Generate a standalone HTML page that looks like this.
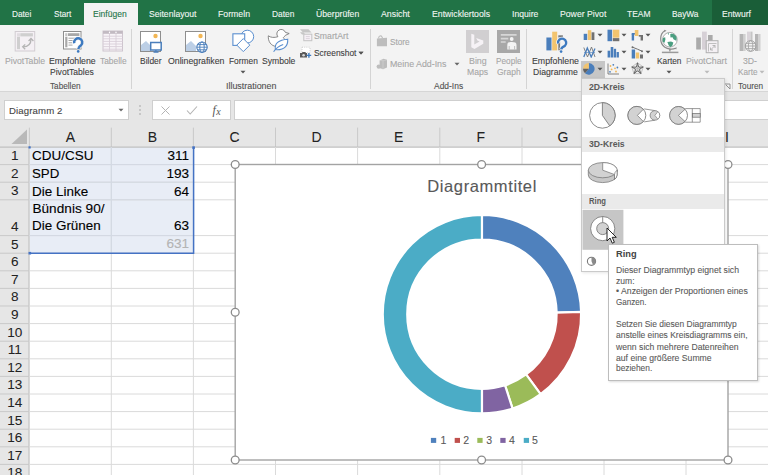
<!DOCTYPE html>
<html><head><meta charset="utf-8"><style>
html,body{margin:0;padding:0;}
body{width:768px;height:475px;overflow:hidden;position:relative;background:#fff;font-family:"Liberation Sans", sans-serif;}
div{font-family:"Liberation Sans", sans-serif;}
</style></head><body>
<div style="position:absolute;left:0px;top:0px;width:768px;height:24.5px;background:#217346;"></div>
<div style="position:absolute;left:712px;top:0px;width:56px;height:24.5px;background:#1a5e38;"></div>
<div style="position:absolute;left:84px;top:3px;width:54px;height:22px;background:#f3f3f3;"></div>
<div style="position:absolute;left:0px;top:24.5px;width:768px;height:67px;background:#f3f3f3;"></div>
<div style="position:absolute;left:0px;top:91px;width:768px;height:1px;background:#d6d6d6;"></div>
<div style="position:absolute;left:131px;top:28.5px;width:1px;height:60px;background:#d4d4d4;"></div>
<div style="position:absolute;left:370px;top:28.5px;width:1px;height:60px;background:#d4d4d4;"></div>
<div style="position:absolute;left:526px;top:28.5px;width:1px;height:60px;background:#d4d4d4;"></div>
<div style="position:absolute;left:732px;top:28.5px;width:1px;height:60px;background:#d4d4d4;"></div>
<svg style="position:absolute;left:238.8px;top:68.9px;z-index:4" width="8" height="6" viewBox="0 0 8 6"><path d="M1.5 1.75L6.5 1.75L4 4.5Z" fill="#555"/></svg>
<svg style="position:absolute;left:356.7px;top:49.5px;z-index:4" width="8" height="6" viewBox="0 0 8 6"><path d="M1.5 1.75L6.5 1.75L4 4.5Z" fill="#555"/></svg>
<svg style="position:absolute;left:453px;top:60.8px;z-index:4" width="8" height="6" viewBox="0 0 8 6"><path d="M1.5 1.75L6.5 1.75L4 4.5Z" fill="#666"/></svg>
<svg style="position:absolute;left:664.5px;top:68.9px;z-index:4" width="8" height="6" viewBox="0 0 8 6"><path d="M1.5 1.75L6.5 1.75L4 4.5Z" fill="#555"/></svg>
<svg style="position:absolute;left:702.5px;top:68.9px;z-index:4" width="8" height="6" viewBox="0 0 8 6"><path d="M1.5 1.75L6.5 1.75L4 4.5Z" fill="#bbb"/></svg>
<svg style="position:absolute;left:757.8px;top:68.9px;z-index:4" width="8" height="6" viewBox="0 0 8 6"><path d="M1.5 1.75L6.5 1.75L4 4.5Z" fill="#bbb"/></svg>
<svg style="position:absolute;left:14px;top:30px;z-index:3" width="22" height="22" viewBox="0 0 22 22"><rect x="1.2" y="1.5" width="19.5" height="19.5" fill="#f4f0f4" stroke="#d2cdd2" stroke-width="1"/>
<rect x="3" y="3.2" width="3" height="3.2" fill="#e0dce0"/><rect x="6.3" y="3.2" width="12.6" height="3.2" fill="#cfcfcf"/>
<rect x="3" y="6.8" width="3" height="12.4" fill="#cfcfcf"/>
<path d="M17 9 C17 14 14.5 16.8 9 16.8" fill="none" stroke="#b4b4b4" stroke-width="1.3"/>
<path d="M14.6 11 L17 8.5 L19.4 11" fill="none" stroke="#b4b4b4" stroke-width="1.3"/>
<path d="M11.2 14.4 L8.7 16.8 L11.2 19.2" fill="none" stroke="#b4b4b4" stroke-width="1.3"/></svg>
<svg style="position:absolute;left:62px;top:30px;z-index:3" width="23" height="24" viewBox="0 0 23 24"><rect x="1.5" y="1.5" width="17.5" height="17.5" fill="#fff" stroke="#8f8f8f" stroke-width="1"/>
<rect x="3.2" y="3.2" width="2.2" height="2.8" fill="#c4c4c4"/><rect x="6" y="3.2" width="11.4" height="2.8" fill="#a8a8a8"/>
<rect x="3.2" y="6.7" width="2.2" height="10.6" fill="#a8a8a8"/>
<path d="M6.5 8.2h7M6.5 10.5h5M6.5 12.8h4M6.5 15.1h4" stroke="#9a9a9a" stroke-width="0.9"/>
<path d="M12.2 13.2 A4.1 4.1 0 1 1 19 15.4 Q16.5 16.8 16.3 19.2" fill="none" stroke="#f3f3f3" stroke-width="3.8"/>
<path d="M12.2 13.2 A4.1 4.1 0 1 1 19 15.4 Q16.5 16.8 16.3 19.2" fill="none" stroke="#3d7ac0" stroke-width="2.4"/>
<circle cx="16.2" cy="21.4" r="1.9" fill="#f3f3f3"/><circle cx="16.2" cy="21.4" r="1.3" fill="#3d7ac0"/></svg>
<svg style="position:absolute;left:102px;top:30px;z-index:3" width="22" height="23" viewBox="0 0 22 23"><rect x="1" y="1" width="19.5" height="20" fill="#f8f4f8" stroke="#cdc4cd" stroke-width="1"/><rect x="1" y="1" width="19.5" height="2.8" fill="#c2bac2"/><path d="M1 6.2H20.5" stroke="#d8ced8" stroke-width="0.9"/><path d="M1 8.8H20.5" stroke="#d8ced8" stroke-width="0.9"/><path d="M1 11.4H20.5" stroke="#d8ced8" stroke-width="0.9"/><path d="M1 14.0H20.5" stroke="#d8ced8" stroke-width="0.9"/><path d="M1 16.6H20.5" stroke="#d8ced8" stroke-width="0.9"/><path d="M1 19.2H20.5" stroke="#d8ced8" stroke-width="0.9"/><path d="M7.5 1V21M14 1V21" stroke="#d8ced8" stroke-width="0.9"/><circle cx="7.5" cy="2.4" r="0.7" fill="#fff"/><circle cx="14" cy="2.4" r="0.7" fill="#fff"/></svg>
<svg style="position:absolute;left:140px;top:31px;z-index:3" width="23" height="23" viewBox="0 0 23 23"><rect x="0.5" y="0.5" width="20" height="20" fill="#fff" stroke="#8e8e8e" stroke-width="1"/>
<circle cx="15.5" cy="5" r="2.2" fill="#f2b654"/>
<path d="M1 20 L1 14 L6 10 L11 15 L11 20Z" fill="#bccfe6"/><rect x="10.7" y="11.5" width="10.5" height="7.5" fill="#fff" stroke="#4a7ebb" stroke-width="1.5"/>
<path d="M15.9 19v1.7M13.5 21h5" stroke="#4a7ebb" stroke-width="1.3"/></svg>
<svg style="position:absolute;left:185px;top:31px;z-index:3" width="23" height="23" viewBox="0 0 23 23"><rect x="0.5" y="0.5" width="20" height="20" fill="#fff" stroke="#8e8e8e" stroke-width="1"/>
<circle cx="15.5" cy="5" r="2.2" fill="#f2b654"/>
<path d="M1 20 L1 14 L6 10 L11 15 L11 20Z" fill="#bccfe6"/><circle cx="17" cy="16.2" r="5.2" fill="#fff" stroke="#4a7ebb" stroke-width="1.1"/>
<ellipse cx="17" cy="16.2" rx="2.2" ry="5.2" fill="none" stroke="#4a7ebb" stroke-width="1"/>
<path d="M11.8 16.2h10.4M12.6 13.6h8.8M12.6 18.8h8.8" stroke="#4a7ebb" stroke-width="0.9"/></svg>
<svg style="position:absolute;left:230px;top:28px;z-index:3" width="26" height="26" viewBox="0 0 26 26"><circle cx="17.3" cy="8.6" r="6.4" fill="#fff" stroke="#5b8fcf" stroke-width="1"/>
<rect x="2.9" y="5.8" width="11.8" height="11.6" fill="#fff" stroke="#5b8fcf" stroke-width="1.1"/>
<path d="M13.3 10.6 L19.8 17.1 L13.3 23.6 L6.8 17.1Z" fill="#fff" stroke="#5b8fcf" stroke-width="1"/></svg>
<svg style="position:absolute;left:266px;top:28px;z-index:3" width="25" height="25" viewBox="0 0 25 25"><path d="M2.3 7.8 C4.5 9.6 8.5 9.9 11.9 8.7 A4.4 4.4 0 1 1 19.4 4.4 L23.2 5.5 L19.3 7.4 C18.7 8.4 17.8 9.2 17.3 9.7 C18.3 10.6 18.7 11.6 18.7 12.6 L10.5 18.6 C4.8 17.8 2 13.5 2.3 7.8Z" fill="#fff" stroke="#7c7c7c" stroke-width="0.9" stroke-linejoin="round"/>
<path d="M9.4 21.6 C8.2 15.8 12.5 11.8 21.7 11.2 C22.2 17.5 18.5 21.8 11.2 21.8Z" fill="#fff" stroke="#5b8fcf" stroke-width="1.1"/>
<path d="M7.6 23.7 C10 20 13 17.8 17.2 16.4" fill="none" stroke="#5b8fcf" stroke-width="1.1"/></svg>
<svg style="position:absolute;left:299px;top:28px;z-index:3" width="15" height="14" viewBox="0 0 15 14"><path d="M1 1.2h8.5l3 3.2H4Z" fill="#c6c6c6"/><path d="M1 4.2h3.5l1.8 2.2H3Z" fill="#c6c6c6"/>
<rect x="4.8" y="6.2" width="8" height="6.5" fill="#f6f0f6" stroke="#c4c4c4" stroke-width="1"/>
<path d="M6.8 8.6h4M6.8 10.6h4" stroke="#d0c8d0" stroke-width="0.7"/></svg>
<svg style="position:absolute;left:299px;top:46px;z-index:3" width="15" height="14" viewBox="0 0 15 14"><rect x="3" y="1.2" width="8" height="5.5" fill="#fff" stroke="#c0c0c0" stroke-width="0.7" stroke-dasharray="1 1.2"/>
<path d="M1 7h1.8l0.8-1h2.6l0.8 1h1v4.6H1Z" fill="#5a5a5a"/><circle cx="4.6" cy="9.2" r="1.3" fill="#d8d8d8"/>
<path d="M9.9 7.1v4.6M7.6 9.4h4.6" stroke="#3d7ac0" stroke-width="1.4"/></svg>
<svg style="position:absolute;left:356.7px;top:49.5px;z-index:4" width="8" height="6" viewBox="0 0 8 6"><path d="M1.5 1.75L6.5 1.75L4 4.5Z" fill="#555"/></svg>
<svg style="position:absolute;left:376px;top:34px;z-index:3" width="13" height="14" viewBox="0 0 13 14"><path d="M0.9 4.6 L11 3.8 L11 12.2 L0.9 12.2Z" fill="#bdbdbd"/><path d="M2.6 4.4 C2.6 2 4.4 1.6 5.3 2 L6.6 4" fill="none" stroke="#bdbdbd" stroke-width="1.1"/></svg>
<svg style="position:absolute;left:376px;top:58px;z-index:3" width="13" height="12" viewBox="0 0 13 12"><path d="M3.6 2.4 L7.6 0.8 L11 1.8 L11 9.6 L7 11.2 L3.6 10Z" fill="#bdbdbd"/><path d="M7 2.7 L7 11.2 M3.6 2.4 L7 2.7 L11 1.8" fill="none" stroke="#d8d8d8" stroke-width="0.5"/><circle cx="2.8" cy="8.6" r="2.2" fill="#bdbdbd"/></svg>
<svg style="position:absolute;left:466px;top:29.5px;z-index:3" width="23" height="23.5" viewBox="0 0 23 23.5"><rect x="0" y="0" width="23" height="23.5" fill="#d1cfd1"/>
<path d="M5.3 3.8 L8.3 4.8 L8.3 14.4 L13.6 11.5 L11.4 10.5 L10.2 8 L17.3 10.4 L17.3 13.8 L8.5 19 L5.3 17.2Z" fill="#f6f2f6"/></svg>
<svg style="position:absolute;left:496.5px;top:29.5px;z-index:3" width="23.5" height="23.5" viewBox="0 0 23.5 23.5"><rect x="0" y="0" width="23.5" height="23.5" fill="#a8a8a8"/>
<path d="M3.8 4.8h15.8M3.8 8.6h7.5M3.8 12h4.9" stroke="#d6d6d6" stroke-width="1.7"/>
<circle cx="14.7" cy="9" r="1.9" fill="#f4f4f4"/><path d="M10.3 19.5 L10.3 15 C10.3 12.6 12 12 14.9 12 C17.8 12 19.5 12.6 19.5 15 L19.5 19.5Z" fill="#f4f4f4"/>
<path d="M12.2 16v3.5M17.6 16v3.5" stroke="#a8a8a8" stroke-width="0.7"/></svg>
<svg style="position:absolute;left:545px;top:30px;z-index:3" width="24" height="24" viewBox="0 0 24 24"><rect x="1.4" y="7.5" width="5.1" height="12.9" fill="#4a7ebb"/>
<rect x="7.2" y="1.7" width="5" height="18.7" fill="#f2c46f"/>
<rect x="13.3" y="5.3" width="4.6" height="2.2" fill="#7a7a7a"/><rect x="13.3" y="8.3" width="1.8" height="12" fill="#7a7a7a"/>
<path d="M13.1 13.6 A4.1 4.1 0 1 1 19.9 15.8 Q16.4 17.2 16.2 19.4" fill="none" stroke="#f3f3f3" stroke-width="3.8"/>
<path d="M13.1 13.6 A4.1 4.1 0 1 1 19.9 15.8 Q16.4 17.2 16.2 19.4" fill="none" stroke="#3d7ac0" stroke-width="2.4"/>
<circle cx="16.1" cy="21.6" r="1.9" fill="#f3f3f3"/><circle cx="16.1" cy="21.6" r="1.3" fill="#3d7ac0"/></svg>
<svg style="position:absolute;left:583px;top:29px;z-index:3" width="12" height="12" viewBox="0 0 12 12"><rect x="0.7" y="4.8" width="3.5" height="6.2" fill="#4a7ebb"/><rect x="4.8" y="1.2" width="3.5" height="9.8" fill="#f2c46f"/><rect x="8.6" y="3.3" width="2.8" height="7.7" fill="#707070"/></svg>
<svg style="position:absolute;left:606.5px;top:28.5px;z-index:3" width="13" height="13" viewBox="0 0 13 13"><rect x="0.5" y="0.7" width="4.6" height="11.5" fill="#4a7ebb"/><rect x="5.8" y="0.7" width="6.5" height="8" fill="#f2c46f"/><rect x="5.8" y="9.1" width="6.5" height="3.1" fill="#707070"/></svg>
<svg style="position:absolute;left:631px;top:29px;z-index:3" width="13" height="12" viewBox="0 0 13 12"><rect x="0.7" y="5" width="2.4" height="6.5" fill="#4a7ebb"/><rect x="0.7" y="4" width="4" height="1.6" fill="#4a7ebb"/><rect x="3.8" y="1" width="3.6" height="6" fill="#f2c46f"/><rect x="7.8" y="6" width="4.2" height="1.6" fill="#707070"/><rect x="9.6" y="6" width="2.4" height="5.5" fill="#707070"/></svg>
<svg style="position:absolute;left:583px;top:45.5px;z-index:3" width="13" height="12.5" viewBox="0 0 13 12.5"><path d="M0.8 1.5 L4.5 11 L8.5 1 L12 11" fill="none" stroke="#777" stroke-width="0.9"/><path d="M0.8 11 L4.3 2 L8.2 11 L12 2.5" fill="none" stroke="#4a7ebb" stroke-width="1.3"/><path d="M1 6.5h11" stroke="#4a7ebb" stroke-width="0.6"/></svg>
<svg style="position:absolute;left:606.5px;top:46px;z-index:3" width="13" height="12" viewBox="0 0 13 12"><rect x="0.6" y="4.7" width="2.6" height="6.8" fill="#4a7ebb"/><rect x="3.7" y="1" width="2.6" height="10.5" fill="#4a7ebb"/><rect x="6.8" y="2.8" width="2.3" height="8.7" fill="#4a7ebb"/><rect x="9.6" y="6" width="2.3" height="5.5" fill="#4a7ebb"/></svg>
<svg style="position:absolute;left:631px;top:45.5px;z-index:3" width="13" height="13" viewBox="0 0 13 13"><rect x="0.7" y="3.5" width="3.4" height="9" fill="#4a7ebb"/><rect x="4.8" y="6.5" width="3.4" height="6" fill="#f2c46f"/><rect x="9" y="8.5" width="3" height="4" fill="#707070"/><path d="M1.5 1.2 L6.5 3.2 L11 5.2" fill="none" stroke="#707070" stroke-width="1"/><circle cx="1.5" cy="1.2" r="1" fill="#707070"/><circle cx="11" cy="5.2" r="1" fill="#707070"/></svg>
<div style="position:absolute;left:581.3px;top:61.2px;width:23.4px;height:16.4px;background:#c6c6c6;"></div>
<svg style="position:absolute;left:582px;top:62px;z-index:3" width="14" height="14" viewBox="0 0 14 14"><path d="M6.8 6.8 L6.8 1 A5.8 5.8 0 1 1 3 11.2Z" fill="#4a7ebb"/><path d="M6.8 6.8 L1 6.8 A5.8 5.8 0 0 1 6.8 1Z" fill="#f2c46f"/><path d="M6.8 6.8 L3 11.2 A5.8 5.8 0 0 1 1 6.8Z" fill="#616161"/></svg>
<svg style="position:absolute;left:607px;top:62.5px;z-index:3" width="13" height="12" viewBox="0 0 13 12"><path d="M1 0.5V11h11" fill="none" stroke="#777" stroke-width="0.9"/><circle cx="3.5" cy="3" r="0.9" fill="#f2b654"/><circle cx="6.3" cy="1.8" r="0.9" fill="#4a7ebb"/><circle cx="4.6" cy="6.4" r="0.9" fill="#f2b654"/><circle cx="8" cy="5.3" r="0.9" fill="#f2b654"/><circle cx="10.4" cy="4.5" r="0.9" fill="#4a7ebb"/><circle cx="3" cy="8.8" r="0.9" fill="#4a7ebb"/><circle cx="9" cy="8.5" r="0.9" fill="#f2b654"/></svg>
<svg style="position:absolute;left:631px;top:62px;z-index:3" width="13" height="13" viewBox="0 0 13 13"><path d="M6.50 0.80 L12.21 4.95 L10.03 11.65 L2.97 11.65 L0.79 4.95Z M6.50 3.80 L9.35 5.87 L8.26 9.23 L4.74 9.23 L3.65 5.87Z M6.5 6.8 L6.50 0.80 M6.5 6.8 L12.21 4.95 M6.5 6.8 L10.03 11.65 M6.5 6.8 L2.97 11.65 M6.5 6.8 L0.79 4.95 " fill="none" stroke="#a0a0a0" stroke-width="0.6"/><path d="M6.50 0.80 L7.68 5.18 L12.21 4.95 L8.40 7.42 L10.03 11.65 L6.50 8.80 L2.97 11.65 L4.60 7.42 L0.79 4.95 L5.32 5.18Z" fill="none" stroke="#606060" stroke-width="0.9"/></svg>
<svg style="position:absolute;left:595.7px;top:32.2px;z-index:4" width="8" height="6" viewBox="0 0 8 6"><path d="M1.5 1.75L6.5 1.75L4 4.5Z" fill="#555"/></svg>
<svg style="position:absolute;left:595.7px;top:48.8px;z-index:4" width="8" height="6" viewBox="0 0 8 6"><path d="M1.5 1.75L6.5 1.75L4 4.5Z" fill="#555"/></svg>
<svg style="position:absolute;left:595.7px;top:65.8px;z-index:4" width="8" height="6" viewBox="0 0 8 6"><path d="M1.5 1.75L6.5 1.75L4 4.5Z" fill="#555"/></svg>
<svg style="position:absolute;left:619.9px;top:32.2px;z-index:4" width="8" height="6" viewBox="0 0 8 6"><path d="M1.5 1.75L6.5 1.75L4 4.5Z" fill="#555"/></svg>
<svg style="position:absolute;left:619.9px;top:48.8px;z-index:4" width="8" height="6" viewBox="0 0 8 6"><path d="M1.5 1.75L6.5 1.75L4 4.5Z" fill="#555"/></svg>
<svg style="position:absolute;left:619.9px;top:65.8px;z-index:4" width="8" height="6" viewBox="0 0 8 6"><path d="M1.5 1.75L6.5 1.75L4 4.5Z" fill="#555"/></svg>
<svg style="position:absolute;left:643.9px;top:32.2px;z-index:4" width="8" height="6" viewBox="0 0 8 6"><path d="M1.5 1.75L6.5 1.75L4 4.5Z" fill="#555"/></svg>
<svg style="position:absolute;left:643.9px;top:48.8px;z-index:4" width="8" height="6" viewBox="0 0 8 6"><path d="M1.5 1.75L6.5 1.75L4 4.5Z" fill="#555"/></svg>
<svg style="position:absolute;left:643.9px;top:65.8px;z-index:4" width="8" height="6" viewBox="0 0 8 6"><path d="M1.5 1.75L6.5 1.75L4 4.5Z" fill="#555"/></svg>
<svg style="position:absolute;left:659px;top:29px;z-index:3" width="22" height="25" viewBox="0 0 22 25"><circle cx="10.9" cy="10.7" r="7.3" fill="#fff" stroke="#9a9a9a" stroke-width="0.8"/>
<path d="M11.2 5.2 C13.5 4 16.5 5 17.6 8.5 C17.8 10 17.6 11.2 17.2 11.8 L14.5 10.2 L13.5 8.2 L11.5 8.5Z" fill="#4a9e80"/>
<path d="M4 9 L6.2 8.2 L6.4 10.5 L5.5 13.8 L3.8 13 C3.5 11.5 3.6 10 4 9Z" fill="#4a9e80"/>
<path d="M8.4 13 L12 12.6 L14.3 13.6 L13.5 16.6 L11.2 18.3 L9.5 16Z" fill="#4a9e80"/>
<path d="M8.6 4.4 L10 4.2 L9.8 6 Z" fill="#4a9e80"/>
<path d="M5.8 1.8 C0.5 5 0.2 14 5.5 18 C9 20.6 14 20.5 16.5 19.2" fill="none" stroke="#8c8c8c" stroke-width="1.2"/>
<path d="M5 0.8 L7.5 1.5 L5.5 3.2Z M17.8 18.2 L17.2 20.6 L15.4 19.2Z" fill="#8c8c8c"/>
<path d="M10.9 19.8V22.6" stroke="#8c8c8c" stroke-width="1.3"/><path d="M2.9 23.4h16.5" stroke="#9a9a9a" stroke-width="1.5"/></svg>
<svg style="position:absolute;left:695px;top:30px;z-index:3" width="24" height="24" viewBox="0 0 24 24"><rect x="1.2" y="7.5" width="4.7" height="12" fill="#aaaaaa"/><rect x="7" y="1.6" width="4.8" height="18" fill="#d6d0d6"/>
<rect x="13" y="5" width="4.6" height="6" fill="#aaaaaa"/>
<rect x="11.2" y="10.7" width="11.8" height="12" fill="#f4f0f4" stroke="#b0b0b0" stroke-width="1"/>
<path d="M13.5 13.5h8M13.5 13.5v8" stroke="#c0c0c0" stroke-width="1"/><path d="M15.5 20 L20 15.5 M17.5 15.5h2.5v2.5 M15.5 17.5v2.5h2.5" fill="none" stroke="#b0b0b0" stroke-width="0.9"/></svg>
<svg style="position:absolute;left:739px;top:30px;z-index:3" width="23" height="23" viewBox="0 0 23 23"><rect x="0.6" y="4" width="4" height="17" fill="#b5b5b5"/><rect x="4.6" y="4" width="2" height="17" fill="#d0d0d0"/>
<rect x="8" y="1.6" width="3.5" height="15" fill="#dad5da"/><rect x="11.5" y="1.6" width="2" height="15" fill="#c5c5c5"/>
<rect x="16" y="4" width="3.5" height="17" fill="#b5b5b5"/><rect x="19.5" y="4" width="2" height="17" fill="#d0d0d0"/>
<circle cx="11.6" cy="16" r="5.3" fill="#f3f3f3" stroke="#a0a0a0" stroke-width="1"/><ellipse cx="11.6" cy="16" rx="2.2" ry="5.3" fill="none" stroke="#a0a0a0" stroke-width="0.8"/>
<path d="M6.3 16h10.6M7 13.4h9.2M7 18.6h9.2" stroke="#a0a0a0" stroke-width="0.8"/></svg>
<svg style="position:absolute;left:724px;top:83px;z-index:3" width="8" height="8" viewBox="0 0 8 8"><path d="M1 1h5v5M6 6L2 2" fill="none" stroke="#888" stroke-width="0.9"/></svg>
<div style="position:absolute;left:0px;top:92px;width:768px;height:55px;background:#e6e6e6;"></div>
<div style="position:absolute;left:4px;top:100.4px;width:124.5px;height:19.8px;background:#fff;box-sizing:border-box;border:1px solid #cfcfcf;"></div>
<svg style="position:absolute;left:116.8px;top:107px;z-index:4" width="8" height="6" viewBox="0 0 8 6"><path d="M1.5 1.75L6.5 1.75L4 4.5Z" fill="#6a6a6a"/></svg>
<svg style="position:absolute;left:138px;top:104px;z-index:3" width="4" height="12" viewBox="0 0 4 12"><circle cx="2" cy="2" r="0.8" fill="#a0a0a0"/><circle cx="2" cy="6" r="0.8" fill="#a0a0a0"/><circle cx="2" cy="10" r="0.8" fill="#a0a0a0"/></svg>
<div style="position:absolute;left:151.5px;top:100.4px;width:79.6px;height:19.8px;background:#fff;box-sizing:border-box;border:1px solid #cfcfcf;"></div>
<svg style="position:absolute;left:160px;top:104.5px;z-index:3" width="11" height="11" viewBox="0 0 11 11"><path d="M1.5 1.5L9.5 9.5M9.5 1.5L1.5 9.5" stroke="#b4b4b4" stroke-width="1"/></svg>
<svg style="position:absolute;left:186px;top:104.5px;z-index:3" width="12" height="11" viewBox="0 0 12 11"><path d="M1 5.5L4.2 9L11 1.5" fill="none" stroke="#b4b4b4" stroke-width="1.1"/></svg>
<div style="position:absolute;left:212.5px;top:104px;font-family:'Liberation Serif',serif;font-style:italic;font-size:12px;line-height:12px;color:#555;z-index:5">f<span style="font-size:10px;position:relative;left:0.3px;top:0.5px">x</span></div>
<div style="position:absolute;left:234.4px;top:100.4px;width:540px;height:19.8px;background:#fff;box-sizing:border-box;border:1px solid #cfcfcf;"></div>
<svg style="position:absolute;left:0px;top:0px;z-index:1" width="768" height="475" viewBox="0 0 768 475"><rect x="29.4" y="147" width="740" height="330" fill="#fff"/><rect x="29.4" y="147" width="164.0" height="106.19999999999999" fill="#e8edf6"/><rect x="0" y="127.6" width="768" height="19.400000000000006" fill="#e6e6e6"/><rect x="0" y="147" width="29.4" height="330" fill="#e6e6e6"/><path d="M11.5 144 L27 144 L27 129.5Z" fill="#b9b9b9"/><path d="M29.4 127.6 V147" stroke="#c9c9c9" stroke-width="1"/><path d="M111.3 127.6 V147" stroke="#c9c9c9" stroke-width="1"/><path d="M193.4 127.6 V147" stroke="#c9c9c9" stroke-width="1"/><path d="M275.5 127.6 V147" stroke="#c9c9c9" stroke-width="1"/><path d="M357.6 127.6 V147" stroke="#c9c9c9" stroke-width="1"/><path d="M439.8 127.6 V147" stroke="#c9c9c9" stroke-width="1"/><path d="M522.0 127.6 V147" stroke="#c9c9c9" stroke-width="1"/><path d="M604.0 127.6 V147" stroke="#c9c9c9" stroke-width="1"/><path d="M686.0 127.6 V147" stroke="#c9c9c9" stroke-width="1"/><path d="M0 147.2 H768" stroke="#c0c0c0" stroke-width="1.2"/><path d="M29 147 V475" stroke="#bcbcbc" stroke-width="1"/><path d="M0 164.60 H29" stroke="#c9c9c9" stroke-width="1"/><path d="M0 182.20 H29" stroke="#c9c9c9" stroke-width="1"/><path d="M0 199.80 H29" stroke="#c9c9c9" stroke-width="1"/><path d="M0 235.60 H29" stroke="#c9c9c9" stroke-width="1"/><path d="M0 253.20 H29" stroke="#c9c9c9" stroke-width="1"/><path d="M0 270.80 H29" stroke="#c9c9c9" stroke-width="1"/><path d="M0 288.40 H29" stroke="#c9c9c9" stroke-width="1"/><path d="M0 306.00 H29" stroke="#c9c9c9" stroke-width="1"/><path d="M0 323.60 H29" stroke="#c9c9c9" stroke-width="1"/><path d="M0 341.20 H29" stroke="#c9c9c9" stroke-width="1"/><path d="M0 358.80 H29" stroke="#c9c9c9" stroke-width="1"/><path d="M0 376.40 H29" stroke="#c9c9c9" stroke-width="1"/><path d="M0 394.00 H29" stroke="#c9c9c9" stroke-width="1"/><path d="M0 411.60 H29" stroke="#c9c9c9" stroke-width="1"/><path d="M0 429.20 H29" stroke="#c9c9c9" stroke-width="1"/><path d="M0 446.80 H29" stroke="#c9c9c9" stroke-width="1"/><path d="M0 464.40 H29" stroke="#c9c9c9" stroke-width="1"/><path d="M0 482.00 H29" stroke="#c9c9c9" stroke-width="1"/><path d="M29.4 164.60 H768" stroke="#dadada" stroke-width="1"/><path d="M29.4 182.20 H768" stroke="#dadada" stroke-width="1"/><path d="M29.4 199.80 H768" stroke="#dadada" stroke-width="1"/><path d="M29.4 235.60 H768" stroke="#dadada" stroke-width="1"/><path d="M29.4 253.20 H768" stroke="#dadada" stroke-width="1"/><path d="M29.4 270.80 H768" stroke="#dadada" stroke-width="1"/><path d="M29.4 288.40 H768" stroke="#dadada" stroke-width="1"/><path d="M29.4 306.00 H768" stroke="#dadada" stroke-width="1"/><path d="M29.4 323.60 H768" stroke="#dadada" stroke-width="1"/><path d="M29.4 341.20 H768" stroke="#dadada" stroke-width="1"/><path d="M29.4 358.80 H768" stroke="#dadada" stroke-width="1"/><path d="M29.4 376.40 H768" stroke="#dadada" stroke-width="1"/><path d="M29.4 394.00 H768" stroke="#dadada" stroke-width="1"/><path d="M29.4 411.60 H768" stroke="#dadada" stroke-width="1"/><path d="M29.4 429.20 H768" stroke="#dadada" stroke-width="1"/><path d="M29.4 446.80 H768" stroke="#dadada" stroke-width="1"/><path d="M29.4 464.40 H768" stroke="#dadada" stroke-width="1"/><path d="M29.4 482.00 H768" stroke="#dadada" stroke-width="1"/><path d="M111.3 147 V475" stroke="#dadada" stroke-width="1"/><path d="M193.4 147 V475" stroke="#dadada" stroke-width="1"/><path d="M275.5 147 V475" stroke="#dadada" stroke-width="1"/><path d="M357.6 147 V475" stroke="#dadada" stroke-width="1"/><path d="M439.8 147 V475" stroke="#dadada" stroke-width="1"/><path d="M522.0 147 V475" stroke="#dadada" stroke-width="1"/><path d="M604.0 147 V475" stroke="#dadada" stroke-width="1"/><path d="M686.0 147 V475" stroke="#dadada" stroke-width="1"/><path d="M29.4 164.60 H193.4" stroke="#d3d9e4" stroke-width="1"/><path d="M29.4 182.20 H193.4" stroke="#d3d9e4" stroke-width="1"/><path d="M29.4 199.80 H193.4" stroke="#d3d9e4" stroke-width="1"/><path d="M29.4 235.60 H193.4" stroke="#d3d9e4" stroke-width="1"/><path d="M111.3 147 V253.20" stroke="#d3d9e4" stroke-width="1"/><path d="M193.6 147.5 V253.20 H29.4" fill="none" stroke="#4472c4" stroke-width="1.5"/><rect x="28.5" y="146.3" width="2.2" height="2.2" fill="#4472c4"/><rect x="192.3" y="146.3" width="2.6" height="2.6" fill="#4472c4"/><rect x="28.5" y="251.90" width="2.6" height="2.6" fill="#4472c4"/></svg>
<svg style="position:absolute;left:0px;top:0px;z-index:6" width="768" height="475" viewBox="0 0 768 475"><rect x="235.2" y="164.5" width="492.8" height="295.5" fill="#fff" stroke="#a3a3a3" stroke-width="1.4"/><path d="M481.95 215.00 A99.2 99.2 0 0 1 581.13 311.98 L556.63 312.53 A74.7 74.7 0 0 0 481.95 239.50Z" fill="#4f81bd" stroke="#fff" stroke-width="2.2" stroke-linejoin="miter"/><path d="M581.13 311.98 A99.2 99.2 0 0 1 540.58 394.22 L526.10 374.46 A74.7 74.7 0 0 0 556.63 312.53Z" fill="#c0504d" stroke="#fff" stroke-width="2.2" stroke-linejoin="miter"/><path d="M540.58 394.22 A99.2 99.2 0 0 1 512.56 408.56 L505.00 385.26 A74.7 74.7 0 0 0 526.10 374.46Z" fill="#9bbb59" stroke="#fff" stroke-width="2.2" stroke-linejoin="miter"/><path d="M512.56 408.56 A99.2 99.2 0 0 1 481.95 413.40 L481.95 388.90 A74.7 74.7 0 0 0 505.00 385.26Z" fill="#8064a2" stroke="#fff" stroke-width="2.2" stroke-linejoin="miter"/><path d="M481.95 413.40 A99.2 99.2 0 0 1 481.95 215.00 L481.95 239.50 A74.7 74.7 0 0 0 481.95 388.90Z" fill="#4bacc6" stroke="#fff" stroke-width="2.2" stroke-linejoin="miter"/><rect x="430.9" y="437.9" width="5.3" height="5" fill="#4f81bd"/><rect x="454.7" y="437.9" width="5.3" height="5" fill="#c0504d"/><rect x="477.3" y="437.9" width="5.3" height="5" fill="#9bbb59"/><rect x="500.3" y="437.9" width="5.3" height="5" fill="#8064a2"/><rect x="523.75" y="437.9" width="5.3" height="5" fill="#4bacc6"/><circle cx="235.2" cy="164.5" r="3.9" fill="#fff" stroke="#8c8c8c" stroke-width="1.3"/><circle cx="235.2" cy="312.2" r="3.9" fill="#fff" stroke="#8c8c8c" stroke-width="1.3"/><circle cx="235.2" cy="460" r="3.9" fill="#fff" stroke="#8c8c8c" stroke-width="1.3"/><circle cx="481.6" cy="164.5" r="3.9" fill="#fff" stroke="#8c8c8c" stroke-width="1.3"/><circle cx="481.6" cy="460" r="3.9" fill="#fff" stroke="#8c8c8c" stroke-width="1.3"/><circle cx="728" cy="164.5" r="3.9" fill="#fff" stroke="#8c8c8c" stroke-width="1.3"/><circle cx="728" cy="312.2" r="3.9" fill="#fff" stroke="#8c8c8c" stroke-width="1.3"/><circle cx="728" cy="460" r="3.9" fill="#fff" stroke="#8c8c8c" stroke-width="1.3"/></svg>
<div style="position:absolute;left:581.4px;top:78.4px;width:143.80000000000007px;height:193.20000000000002px;background:#fff;box-sizing:border-box;border:1px solid #cacaca;box-shadow:1px 1px 3px rgba(0,0,0,0.10);z-index:10;"></div>
<div style="position:absolute;left:582.4px;top:79.4px;width:141.80000000000007px;height:15.799999999999997px;background:#eaeaea;z-index:11;"></div>
<div style="position:absolute;left:582.4px;top:136.6px;width:141.80000000000007px;height:15.599999999999994px;background:#eaeaea;z-index:11;"></div>
<div style="position:absolute;left:582.4px;top:194.2px;width:141.80000000000007px;height:14.400000000000006px;background:#eaeaea;z-index:11;"></div>
<svg style="position:absolute;left:0px;top:0px;z-index:12" width="768" height="475" viewBox="0 0 768 475"><circle cx="602.4" cy="115.4" r="12.8" fill="#fff" stroke="#6e6e6e" stroke-width="0.8"/><path d="M602.4 115.4 L602.4 102.6 A12.8 12.8 0 0 1 609.74 125.89Z" fill="#d2d2d2" stroke="#6e6e6e" stroke-width="0.8"/><path d="M644.2 108.9 L654.9 110.6 M644.2 121.9 L654.9 120.2" stroke="#6e6e6e" stroke-width="0.7"/><circle cx="636.8" cy="115.4" r="9" fill="#fff" stroke="#6e6e6e" stroke-width="0.8"/><path d="M637.4 115.4 L643.4 109.2 A9 9 0 1 0 643.4 121.6 Z" fill="#d2d2d2" stroke="#6e6e6e" stroke-width="0.7"/><circle cx="654.9" cy="115.4" r="4.8" fill="#d2d2d2" stroke="#6e6e6e" stroke-width="0.7"/><path d="M654.9 115.4 L657.9 111.6 A4.8 4.8 0 0 1 657.9 119.2Z" fill="#fff" stroke="#6e6e6e" stroke-width="0.6"/><path d="M685.2 108.6 H700.2 V122.2 H685.2" fill="#fff" stroke="#6e6e6e" stroke-width="0.7"/><circle cx="678.6" cy="115.4" r="8.9" fill="#fff" stroke="#6e6e6e" stroke-width="0.8"/><path d="M678.4 115.4 L685 109.3 A8.9 8.9 0 1 0 685 121.5 Z" fill="#d2d2d2" stroke="#6e6e6e" stroke-width="0.7"/><rect x="692.3" y="113.5" width="7.9" height="3.7" fill="#d2d2d2" stroke="#6e6e6e" stroke-width="0.7"/><path d="M692.3 108.6 V122.2" stroke="#6e6e6e" stroke-width="0.7"/><path d="M588.3 170.2 V175 A14.4 7.6 0 0 0 617.1 175 V170.2" fill="#c8c8c8" stroke="#6e6e6e" stroke-width="0.7"/><ellipse cx="602.7" cy="170.2" rx="14.4" ry="7.6" fill="#d2d2d2" stroke="#6e6e6e" stroke-width="0.7"/><path d="M602.7 170.2 L602.7 162.6 A14.4 7.6 0 0 1 614.50 174.56Z" fill="#fff" stroke="#6e6e6e" stroke-width="0.7"/><path d="M614.50 174.56 V179.36" stroke="#6e6e6e" stroke-width="0.7"/><path d="M614.50 174.56 A14.4 7.6 0 0 1 617.1 170.2 V175 A14.4 7.6 0 0 1 614.50 179.36Z" fill="#fff" stroke="#6e6e6e" stroke-width="0.7"/><rect x="582.5" y="209.8" width="40.9" height="40" fill="#c6c6c6"/><circle cx="602.7" cy="228.6" r="12.1" fill="#fff" stroke="#6e6e6e" stroke-width="0.8"/><circle cx="602.7" cy="228.6" r="6" fill="#d2d2d2" stroke="#6e6e6e" stroke-width="0.8"/><path d="M602.7 216.5 V222.6" stroke="#6e6e6e" stroke-width="0.8"/><circle cx="591.5" cy="261.3" r="4.1" fill="#fff" stroke="#7a7a7a" stroke-width="1.1"/><path d="M591.5 261.3 V257.2 A4.1 4.1 0 0 1 593 265.1Z" fill="#8a8a8a"/></svg>
<svg style="position:absolute;left:606px;top:227px;z-index:20" width="12" height="18" viewBox="0 0 12 18"><path d="M1 1 L1 14 L4 11 L6.3 16.2 L8.4 15.3 L6.2 10.3 L10.3 10.3Z" fill="#fff" stroke="#111" stroke-width="0.9" stroke-linejoin="round"/></svg>
<div style="position:absolute;left:607.6px;top:243.6px;width:150px;height:137px;background:#fff;box-sizing:border-box;border:1px solid #bdbdbd;box-shadow:1px 1px 2px rgba(0,0,0,0.15);z-index:15;"></div>
<div style="position:absolute;left:12.00px;top:9.20px;font-size:9.8px;line-height:1;color:#f2f6f3;font-weight:normal;letter-spacing:0.000px;white-space:nowrap;z-index:5;transform:scaleX(0.8439);transform-origin:0 0;-webkit-text-stroke:0.1px #f2f6f3">Datei</div>
<div style="position:absolute;left:54.40px;top:9.20px;font-size:9.8px;line-height:1;color:#f2f6f3;font-weight:normal;letter-spacing:0.000px;white-space:nowrap;z-index:5;transform:scaleX(0.8314);transform-origin:0 0;-webkit-text-stroke:0.1px #f2f6f3">Start</div>
<div style="position:absolute;left:149.00px;top:9.20px;font-size:9.8px;line-height:1;color:#f2f6f3;font-weight:normal;letter-spacing:0.000px;white-space:nowrap;z-index:5;transform:scaleX(0.8809);transform-origin:0 0;-webkit-text-stroke:0.1px #f2f6f3">Seitenlayout</div>
<div style="position:absolute;left:218.00px;top:9.20px;font-size:9.8px;line-height:1;color:#f2f6f3;font-weight:normal;letter-spacing:0.000px;white-space:nowrap;z-index:5;transform:scaleX(0.8906);transform-origin:0 0;-webkit-text-stroke:0.1px #f2f6f3">Formeln</div>
<div style="position:absolute;left:271.70px;top:9.20px;font-size:9.8px;line-height:1;color:#f2f6f3;font-weight:normal;letter-spacing:0.000px;white-space:nowrap;z-index:5;transform:scaleX(0.8530);transform-origin:0 0;-webkit-text-stroke:0.1px #f2f6f3">Daten</div>
<div style="position:absolute;left:315.80px;top:9.20px;font-size:9.8px;line-height:1;color:#f2f6f3;font-weight:normal;letter-spacing:0.000px;white-space:nowrap;z-index:5;transform:scaleX(0.8814);transform-origin:0 0;-webkit-text-stroke:0.1px #f2f6f3">Überprüfen</div>
<div style="position:absolute;left:380.80px;top:9.20px;font-size:9.8px;line-height:1;color:#f2f6f3;font-weight:normal;letter-spacing:0.000px;white-space:nowrap;z-index:5;transform:scaleX(0.8964);transform-origin:0 0;-webkit-text-stroke:0.1px #f2f6f3">Ansicht</div>
<div style="position:absolute;left:431.70px;top:9.20px;font-size:9.8px;line-height:1;color:#f2f6f3;font-weight:normal;letter-spacing:0.000px;white-space:nowrap;z-index:5;transform:scaleX(0.8893);transform-origin:0 0;-webkit-text-stroke:0.1px #f2f6f3">Entwicklertools</div>
<div style="position:absolute;left:511.70px;top:9.20px;font-size:9.8px;line-height:1;color:#f2f6f3;font-weight:normal;letter-spacing:0.000px;white-space:nowrap;z-index:5;transform:scaleX(0.8780);transform-origin:0 0;-webkit-text-stroke:0.1px #f2f6f3">Inquire</div>
<div style="position:absolute;left:559.50px;top:9.20px;font-size:9.8px;line-height:1;color:#f2f6f3;font-weight:normal;letter-spacing:0.000px;white-space:nowrap;z-index:5;transform:scaleX(0.8858);transform-origin:0 0;-webkit-text-stroke:0.1px #f2f6f3">Power Pivot</div>
<div style="position:absolute;left:627.00px;top:9.20px;font-size:9.8px;line-height:1;color:#f2f6f3;font-weight:normal;letter-spacing:0.000px;white-space:nowrap;z-index:5;transform:scaleX(0.8635);transform-origin:0 0;-webkit-text-stroke:0.1px #f2f6f3">TEAM</div>
<div style="position:absolute;left:672.00px;top:9.20px;font-size:9.8px;line-height:1;color:#f2f6f3;font-weight:normal;letter-spacing:0.000px;white-space:nowrap;z-index:5;transform:scaleX(0.8490);transform-origin:0 0;-webkit-text-stroke:0.1px #f2f6f3">BayWa</div>
<div style="position:absolute;left:721.50px;top:9.20px;font-size:9.8px;line-height:1;color:#f2f6f3;font-weight:normal;letter-spacing:0.000px;white-space:nowrap;z-index:5;transform:scaleX(0.8732);transform-origin:0 0;-webkit-text-stroke:0.1px #f2f6f3">Entwurf</div>
<div style="position:absolute;left:93.30px;top:9.20px;font-size:9.8px;line-height:1;color:#217346;font-weight:normal;letter-spacing:0.000px;white-space:nowrap;z-index:5;transform:scaleX(0.8713);transform-origin:0 0;-webkit-text-stroke:0.1px #217346">Einfügen</div>
<div style="position:absolute;left:4.70px;top:56.70px;font-size:9.1px;line-height:1;color:#a6a6a6;font-weight:normal;letter-spacing:0.000px;white-space:nowrap;z-index:5;transform:scaleX(0.9534);transform-origin:0 0;-webkit-text-stroke:0.1px #a6a6a6">PivotTable</div>
<div style="position:absolute;left:48.50px;top:56.90px;font-size:9.1px;line-height:1;color:#3e3e3e;font-weight:normal;letter-spacing:0.000px;white-space:nowrap;z-index:5;transform:scaleX(0.9622);transform-origin:0 0;-webkit-text-stroke:0.1px #3e3e3e">Empfohlene</div>
<div style="position:absolute;left:50.00px;top:68.40px;font-size:9.1px;line-height:1;color:#3e3e3e;font-weight:normal;letter-spacing:0.000px;white-space:nowrap;z-index:5;transform:scaleX(0.9419);transform-origin:0 0;-webkit-text-stroke:0.1px #3e3e3e">PivotTables</div>
<div style="position:absolute;left:99.60px;top:56.90px;font-size:9.1px;line-height:1;color:#a6a6a6;font-weight:normal;letter-spacing:0.000px;white-space:nowrap;z-index:5;transform:scaleX(0.9231);transform-origin:0 0;-webkit-text-stroke:0.1px #a6a6a6">Tabelle</div>
<div style="position:absolute;left:50.00px;top:82.10px;font-size:9.1px;line-height:1;color:#505050;font-weight:normal;letter-spacing:0.000px;white-space:nowrap;z-index:5;transform:scaleX(0.9004);transform-origin:0 0;-webkit-text-stroke:0.1px #505050">Tabellen</div>
<div style="position:absolute;left:139.60px;top:56.90px;font-size:9.1px;line-height:1;color:#3e3e3e;font-weight:normal;letter-spacing:0.000px;white-space:nowrap;z-index:5;transform:scaleX(0.9291);transform-origin:0 0;-webkit-text-stroke:0.1px #3e3e3e">Bilder</div>
<div style="position:absolute;left:167.60px;top:56.90px;font-size:9.1px;line-height:1;color:#3e3e3e;font-weight:normal;letter-spacing:0.000px;white-space:nowrap;z-index:5;transform:scaleX(0.9618);transform-origin:0 0;-webkit-text-stroke:0.1px #3e3e3e">Onlinegrafiken</div>
<div style="position:absolute;left:228.80px;top:56.90px;font-size:9.1px;line-height:1;color:#3e3e3e;font-weight:normal;letter-spacing:0.000px;white-space:nowrap;z-index:5;transform:scaleX(0.9192);transform-origin:0 0;-webkit-text-stroke:0.1px #3e3e3e">Formen</div>
<div style="position:absolute;left:262.00px;top:56.90px;font-size:9.1px;line-height:1;color:#3e3e3e;font-weight:normal;letter-spacing:0.000px;white-space:nowrap;z-index:5;transform:scaleX(0.9440);transform-origin:0 0;-webkit-text-stroke:0.1px #3e3e3e">Symbole</div>
<div style="position:absolute;left:225.90px;top:82.10px;font-size:9.1px;line-height:1;color:#505050;font-weight:normal;letter-spacing:0.000px;white-space:nowrap;z-index:5;transform:scaleX(0.9775);transform-origin:0 0;-webkit-text-stroke:0.1px #505050">Illustrationen</div>
<div style="position:absolute;left:313.90px;top:31.60px;font-size:9.1px;line-height:1;color:#a6a6a6;font-weight:normal;letter-spacing:0.000px;white-space:nowrap;z-index:5;transform:scaleX(0.9561);transform-origin:0 0;-webkit-text-stroke:0.1px #a6a6a6">SmartArt</div>
<div style="position:absolute;left:313.90px;top:48.60px;font-size:9.1px;line-height:1;color:#3e3e3e;font-weight:normal;letter-spacing:0.000px;white-space:nowrap;z-index:5;transform:scaleX(0.9217);transform-origin:0 0;-webkit-text-stroke:0.1px #3e3e3e">Screenshot</div>
<div style="position:absolute;left:390.30px;top:37.50px;font-size:9.1px;line-height:1;color:#a6a6a6;font-weight:normal;letter-spacing:0.000px;white-space:nowrap;z-index:5;transform:scaleX(0.9064);transform-origin:0 0;-webkit-text-stroke:0.1px #a6a6a6">Store</div>
<div style="position:absolute;left:390.30px;top:60.30px;font-size:9.1px;line-height:1;color:#a6a6a6;font-weight:normal;letter-spacing:0.000px;white-space:nowrap;z-index:5;transform:scaleX(0.9704);transform-origin:0 0;-webkit-text-stroke:0.1px #a6a6a6">Meine Add-Ins</div>
<div style="position:absolute;left:468.70px;top:56.90px;font-size:9.1px;line-height:1;color:#a6a6a6;font-weight:normal;letter-spacing:0.000px;white-space:nowrap;z-index:5;transform:scaleX(0.9725);transform-origin:0 0;-webkit-text-stroke:0.1px #a6a6a6">Bing</div>
<div style="position:absolute;left:466.80px;top:68.40px;font-size:9.1px;line-height:1;color:#a6a6a6;font-weight:normal;letter-spacing:0.000px;white-space:nowrap;z-index:5;transform:scaleX(0.9489);transform-origin:0 0;-webkit-text-stroke:0.1px #a6a6a6">Maps</div>
<div style="position:absolute;left:495.70px;top:56.90px;font-size:9.1px;line-height:1;color:#a6a6a6;font-weight:normal;letter-spacing:0.000px;white-space:nowrap;z-index:5;transform:scaleX(0.9041);transform-origin:0 0;-webkit-text-stroke:0.1px #a6a6a6">People</div>
<div style="position:absolute;left:496.70px;top:68.40px;font-size:9.1px;line-height:1;color:#a6a6a6;font-weight:normal;letter-spacing:0.000px;white-space:nowrap;z-index:5;transform:scaleX(0.9338);transform-origin:0 0;-webkit-text-stroke:0.1px #a6a6a6">Graph</div>
<div style="position:absolute;left:434.20px;top:82.10px;font-size:9.1px;line-height:1;color:#505050;font-weight:normal;letter-spacing:0.000px;white-space:nowrap;z-index:5;transform:scaleX(0.9285);transform-origin:0 0;-webkit-text-stroke:0.1px #505050">Add-Ins</div>
<div style="position:absolute;left:532.00px;top:56.90px;font-size:9.1px;line-height:1;color:#3e3e3e;font-weight:normal;letter-spacing:0.000px;white-space:nowrap;z-index:5;transform:scaleX(0.9664);transform-origin:0 0;-webkit-text-stroke:0.1px #3e3e3e">Empfohlene</div>
<div style="position:absolute;left:533.00px;top:68.40px;font-size:9.1px;line-height:1;color:#3e3e3e;font-weight:normal;letter-spacing:0.000px;white-space:nowrap;z-index:5;transform:scaleX(0.9511);transform-origin:0 0;-webkit-text-stroke:0.1px #3e3e3e">Diagramme</div>
<div style="position:absolute;left:656.80px;top:56.90px;font-size:9.1px;line-height:1;color:#3e3e3e;font-weight:normal;letter-spacing:0.000px;white-space:nowrap;z-index:5;transform:scaleX(0.9107);transform-origin:0 0;-webkit-text-stroke:0.1px #3e3e3e">Karten</div>
<div style="position:absolute;left:686.00px;top:56.90px;font-size:9.1px;line-height:1;color:#a6a6a6;font-weight:normal;letter-spacing:0.000px;white-space:nowrap;z-index:5;transform:scaleX(0.9634);transform-origin:0 0;-webkit-text-stroke:0.1px #a6a6a6">PivotChart</div>
<div style="position:absolute;left:743.40px;top:56.90px;font-size:9.1px;line-height:1;color:#a6a6a6;font-weight:normal;letter-spacing:0.000px;white-space:nowrap;z-index:5;transform:scaleX(0.9554);transform-origin:0 0;-webkit-text-stroke:0.1px #a6a6a6">3D-</div>
<div style="position:absolute;left:738.20px;top:68.40px;font-size:9.1px;line-height:1;color:#a6a6a6;font-weight:normal;letter-spacing:0.000px;white-space:nowrap;z-index:5;transform:scaleX(0.9018);transform-origin:0 0;-webkit-text-stroke:0.1px #a6a6a6">Karte</div>
<div style="position:absolute;left:738.20px;top:82.10px;font-size:9.1px;line-height:1;color:#505050;font-weight:normal;letter-spacing:0.000px;white-space:nowrap;z-index:5;transform:scaleX(0.8991);transform-origin:0 0;-webkit-text-stroke:0.1px #505050">Touren</div>
<div style="position:absolute;left:9.00px;top:105.87px;font-size:9.6px;line-height:1;color:#444;font-weight:normal;letter-spacing:0.125px;white-space:nowrap;z-index:5;-webkit-text-stroke:0.1px #444">Diagramm 2</div>
<div style="position:absolute;left:65.68px;top:129.75px;font-size:14px;line-height:1;color:#222;font-weight:normal;letter-spacing:0.000px;white-space:nowrap;z-index:2;-webkit-text-stroke:0.04px #222">A</div>
<div style="position:absolute;left:147.68px;top:129.75px;font-size:14px;line-height:1;color:#222;font-weight:normal;letter-spacing:0.000px;white-space:nowrap;z-index:2;-webkit-text-stroke:0.04px #222">B</div>
<div style="position:absolute;left:229.39px;top:129.75px;font-size:14px;line-height:1;color:#222;font-weight:normal;letter-spacing:0.000px;white-space:nowrap;z-index:2;-webkit-text-stroke:0.04px #222">C</div>
<div style="position:absolute;left:311.49px;top:129.75px;font-size:14px;line-height:1;color:#222;font-weight:normal;letter-spacing:0.000px;white-space:nowrap;z-index:2;-webkit-text-stroke:0.04px #222">D</div>
<div style="position:absolute;left:394.03px;top:129.75px;font-size:14px;line-height:1;color:#222;font-weight:normal;letter-spacing:0.000px;white-space:nowrap;z-index:2;-webkit-text-stroke:0.04px #222">E</div>
<div style="position:absolute;left:476.62px;top:129.75px;font-size:14px;line-height:1;color:#222;font-weight:normal;letter-spacing:0.000px;white-space:nowrap;z-index:2;-webkit-text-stroke:0.04px #222">F</div>
<div style="position:absolute;left:557.56px;top:129.75px;font-size:14px;line-height:1;color:#222;font-weight:normal;letter-spacing:0.000px;white-space:nowrap;z-index:2;-webkit-text-stroke:0.04px #222">G</div>
<div style="position:absolute;left:639.94px;top:129.75px;font-size:14px;line-height:1;color:#222;font-weight:normal;letter-spacing:0.000px;white-space:nowrap;z-index:2;-webkit-text-stroke:0.04px #222">H</div>
<div style="position:absolute;left:725.06px;top:129.75px;font-size:14px;line-height:1;color:#222;font-weight:normal;letter-spacing:0.000px;white-space:nowrap;z-index:2;-webkit-text-stroke:0.04px #222">I</div>
<div style="position:absolute;left:11.02px;top:148.99px;font-size:13.6px;line-height:1;color:#222;font-weight:normal;letter-spacing:0.000px;white-space:nowrap;z-index:2;-webkit-text-stroke:0.04px #222">1</div>
<div style="position:absolute;left:11.02px;top:166.59px;font-size:13.6px;line-height:1;color:#222;font-weight:normal;letter-spacing:0.000px;white-space:nowrap;z-index:2;-webkit-text-stroke:0.04px #222">2</div>
<div style="position:absolute;left:11.02px;top:184.19px;font-size:13.6px;line-height:1;color:#222;font-weight:normal;letter-spacing:0.000px;white-space:nowrap;z-index:2;-webkit-text-stroke:0.04px #222">3</div>
<div style="position:absolute;left:11.02px;top:219.99px;font-size:13.6px;line-height:1;color:#222;font-weight:normal;letter-spacing:0.000px;white-space:nowrap;z-index:2;-webkit-text-stroke:0.04px #222">4</div>
<div style="position:absolute;left:11.02px;top:237.59px;font-size:13.6px;line-height:1;color:#222;font-weight:normal;letter-spacing:0.000px;white-space:nowrap;z-index:2;-webkit-text-stroke:0.04px #222">5</div>
<div style="position:absolute;left:11.02px;top:255.19px;font-size:13.6px;line-height:1;color:#222;font-weight:normal;letter-spacing:0.000px;white-space:nowrap;z-index:2;-webkit-text-stroke:0.04px #222">6</div>
<div style="position:absolute;left:11.02px;top:272.79px;font-size:13.6px;line-height:1;color:#222;font-weight:normal;letter-spacing:0.000px;white-space:nowrap;z-index:2;-webkit-text-stroke:0.04px #222">7</div>
<div style="position:absolute;left:11.02px;top:290.39px;font-size:13.6px;line-height:1;color:#222;font-weight:normal;letter-spacing:0.000px;white-space:nowrap;z-index:2;-webkit-text-stroke:0.04px #222">8</div>
<div style="position:absolute;left:11.02px;top:307.99px;font-size:13.6px;line-height:1;color:#222;font-weight:normal;letter-spacing:0.000px;white-space:nowrap;z-index:2;-webkit-text-stroke:0.04px #222">9</div>
<div style="position:absolute;left:7.24px;top:325.59px;font-size:13.6px;line-height:1;color:#222;font-weight:normal;letter-spacing:0.000px;white-space:nowrap;z-index:2;-webkit-text-stroke:0.04px #222">10</div>
<div style="position:absolute;left:7.74px;top:343.19px;font-size:13.6px;line-height:1;color:#222;font-weight:normal;letter-spacing:0.000px;white-space:nowrap;z-index:2;-webkit-text-stroke:0.04px #222">11</div>
<div style="position:absolute;left:7.24px;top:360.79px;font-size:13.6px;line-height:1;color:#222;font-weight:normal;letter-spacing:0.000px;white-space:nowrap;z-index:2;-webkit-text-stroke:0.04px #222">12</div>
<div style="position:absolute;left:7.24px;top:378.39px;font-size:13.6px;line-height:1;color:#222;font-weight:normal;letter-spacing:0.000px;white-space:nowrap;z-index:2;-webkit-text-stroke:0.04px #222">13</div>
<div style="position:absolute;left:7.24px;top:395.99px;font-size:13.6px;line-height:1;color:#222;font-weight:normal;letter-spacing:0.000px;white-space:nowrap;z-index:2;-webkit-text-stroke:0.04px #222">14</div>
<div style="position:absolute;left:7.24px;top:413.59px;font-size:13.6px;line-height:1;color:#222;font-weight:normal;letter-spacing:0.000px;white-space:nowrap;z-index:2;-webkit-text-stroke:0.04px #222">15</div>
<div style="position:absolute;left:7.24px;top:431.19px;font-size:13.6px;line-height:1;color:#222;font-weight:normal;letter-spacing:0.000px;white-space:nowrap;z-index:2;-webkit-text-stroke:0.04px #222">16</div>
<div style="position:absolute;left:7.24px;top:448.79px;font-size:13.6px;line-height:1;color:#222;font-weight:normal;letter-spacing:0.000px;white-space:nowrap;z-index:2;-webkit-text-stroke:0.04px #222">17</div>
<div style="position:absolute;left:7.24px;top:466.39px;font-size:13.6px;line-height:1;color:#222;font-weight:normal;letter-spacing:0.000px;white-space:nowrap;z-index:2;-webkit-text-stroke:0.04px #222">18</div>
<div style="position:absolute;left:32.00px;top:149.49px;font-size:13.6px;line-height:1;color:#000;font-weight:normal;letter-spacing:0.000px;white-space:nowrap;z-index:2;transform:scaleX(0.9915);transform-origin:0 0;-webkit-text-stroke:0.12px #000">CDU/CSU</div>
<div style="position:absolute;left:32.40px;top:167.29px;font-size:13.6px;line-height:1;color:#000;font-weight:normal;letter-spacing:0.000px;white-space:nowrap;z-index:2;transform:scaleX(0.9767);transform-origin:0 0;-webkit-text-stroke:0.12px #000">SPD</div>
<div style="position:absolute;left:32.40px;top:184.79px;font-size:13.6px;line-height:1;color:#000;font-weight:normal;letter-spacing:0.000px;white-space:nowrap;z-index:2;transform:scaleX(0.9917);transform-origin:0 0;-webkit-text-stroke:0.12px #000">Die Linke</div>
<div style="position:absolute;left:32.40px;top:202.29px;font-size:13.6px;line-height:1;color:#000;font-weight:normal;letter-spacing:0.036px;white-space:nowrap;z-index:2;-webkit-text-stroke:0.12px #000">Bündnis 90/</div>
<div style="position:absolute;left:32.40px;top:219.49px;font-size:13.6px;line-height:1;color:#000;font-weight:normal;letter-spacing:0.000px;white-space:nowrap;z-index:2;transform:scaleX(0.9897);transform-origin:0 0;-webkit-text-stroke:0.12px #000">Die Grünen</div>
<div style="position:absolute;left:167.43px;top:149.49px;font-size:13.6px;line-height:1;color:#000;font-weight:normal;letter-spacing:0.000px;white-space:nowrap;z-index:2;-webkit-text-stroke:0.12px #000">311</div>
<div style="position:absolute;left:166.42px;top:167.29px;font-size:13.6px;line-height:1;color:#000;font-weight:normal;letter-spacing:0.000px;white-space:nowrap;z-index:2;-webkit-text-stroke:0.12px #000">193</div>
<div style="position:absolute;left:173.98px;top:184.79px;font-size:13.6px;line-height:1;color:#000;font-weight:normal;letter-spacing:0.000px;white-space:nowrap;z-index:2;-webkit-text-stroke:0.12px #000">64</div>
<div style="position:absolute;left:173.98px;top:219.49px;font-size:13.6px;line-height:1;color:#000;font-weight:normal;letter-spacing:0.000px;white-space:nowrap;z-index:2;-webkit-text-stroke:0.12px #000">63</div>
<div style="position:absolute;left:166.42px;top:236.99px;font-size:13.6px;line-height:1;color:#b4b4b4;font-weight:normal;letter-spacing:0.000px;white-space:nowrap;z-index:2;-webkit-text-stroke:0.12px #b4b4b4">631</div>
<div style="position:absolute;left:427.30px;top:178.33px;font-size:16.5px;line-height:1;color:#595959;font-weight:normal;letter-spacing:0.602px;white-space:nowrap;z-index:7;-webkit-text-stroke:0.12px #595959">Diagrammtitel</div>
<div style="position:absolute;left:440.60px;top:434.51px;font-size:10.5px;line-height:1;color:#595959;font-weight:normal;letter-spacing:0.000px;white-space:nowrap;z-index:7;-webkit-text-stroke:0.1px #595959">1</div>
<div style="position:absolute;left:463.30px;top:434.51px;font-size:10.5px;line-height:1;color:#595959;font-weight:normal;letter-spacing:0.000px;white-space:nowrap;z-index:7;-webkit-text-stroke:0.1px #595959">2</div>
<div style="position:absolute;left:486.20px;top:434.51px;font-size:10.5px;line-height:1;color:#595959;font-weight:normal;letter-spacing:0.000px;white-space:nowrap;z-index:7;-webkit-text-stroke:0.1px #595959">3</div>
<div style="position:absolute;left:508.90px;top:434.51px;font-size:10.5px;line-height:1;color:#595959;font-weight:normal;letter-spacing:0.000px;white-space:nowrap;z-index:7;-webkit-text-stroke:0.1px #595959">4</div>
<div style="position:absolute;left:532.00px;top:434.51px;font-size:10.5px;line-height:1;color:#595959;font-weight:normal;letter-spacing:0.000px;white-space:nowrap;z-index:7;-webkit-text-stroke:0.1px #595959">5</div>
<div style="position:absolute;left:589.30px;top:82.71px;font-size:9.2px;line-height:1;color:#5a5a5a;font-weight:bold;letter-spacing:0.000px;white-space:nowrap;z-index:12;transform:scaleX(0.9448);transform-origin:0 0;-webkit-text-stroke:0px #5a5a5a">2D-Kreis</div>
<div style="position:absolute;left:589.30px;top:139.81px;font-size:9.2px;line-height:1;color:#5a5a5a;font-weight:bold;letter-spacing:0.000px;white-space:nowrap;z-index:12;transform:scaleX(0.9448);transform-origin:0 0;-webkit-text-stroke:0px #5a5a5a">3D-Kreis</div>
<div style="position:absolute;left:589.30px;top:196.71px;font-size:9.2px;line-height:1;color:#5a5a5a;font-weight:bold;letter-spacing:0.000px;white-space:nowrap;z-index:12;transform:scaleX(0.8329);transform-origin:0 0;-webkit-text-stroke:0px #5a5a5a">Ring</div>
<div style="position:absolute;left:616.40px;top:249.17px;font-size:9.6px;line-height:1;color:#444;font-weight:bold;letter-spacing:0.000px;white-space:nowrap;z-index:16;transform:scaleX(0.9665);transform-origin:0 0;-webkit-text-stroke:0px #444">Ring</div>
<div style="position:absolute;left:616.40px;top:264.67px;font-size:9.6px;line-height:1;color:#5a5a5a;font-weight:normal;letter-spacing:0.000px;white-space:nowrap;z-index:16;transform:scaleX(0.9047);transform-origin:0 0;-webkit-text-stroke:0.1px #5a5a5a">Dieser Diagrammtyp eignet sich</div>
<div style="position:absolute;left:616.40px;top:275.57px;font-size:9.6px;line-height:1;color:#5a5a5a;font-weight:normal;letter-spacing:0.000px;white-space:nowrap;z-index:16;transform:scaleX(0.8899);transform-origin:0 0;-webkit-text-stroke:0.1px #5a5a5a">zum:</div>
<div style="position:absolute;left:616.40px;top:286.47px;font-size:9.6px;line-height:1;color:#5a5a5a;font-weight:normal;letter-spacing:0.000px;white-space:nowrap;z-index:16;transform:scaleX(0.9076);transform-origin:0 0;-webkit-text-stroke:0.1px #5a5a5a">• Anzeigen der Proportionen eines</div>
<div style="position:absolute;left:616.40px;top:297.37px;font-size:9.6px;line-height:1;color:#5a5a5a;font-weight:normal;letter-spacing:0.000px;white-space:nowrap;z-index:16;transform:scaleX(0.8410);transform-origin:0 0;-webkit-text-stroke:0.1px #5a5a5a">Ganzen.</div>
<div style="position:absolute;left:616.40px;top:319.27px;font-size:9.6px;line-height:1;color:#5a5a5a;font-weight:normal;letter-spacing:0.000px;white-space:nowrap;z-index:16;transform:scaleX(0.8815);transform-origin:0 0;-webkit-text-stroke:0.1px #5a5a5a">Setzen Sie diesen Diagrammtyp</div>
<div style="position:absolute;left:616.40px;top:330.47px;font-size:9.6px;line-height:1;color:#5a5a5a;font-weight:normal;letter-spacing:0.000px;white-space:nowrap;z-index:16;transform:scaleX(0.8839);transform-origin:0 0;-webkit-text-stroke:0.1px #5a5a5a">anstelle eines Kreisdiagramms ein,</div>
<div style="position:absolute;left:616.40px;top:341.57px;font-size:9.6px;line-height:1;color:#5a5a5a;font-weight:normal;letter-spacing:0.000px;white-space:nowrap;z-index:16;transform:scaleX(0.9008);transform-origin:0 0;-webkit-text-stroke:0.1px #5a5a5a">wenn sich mehrere Datenreihen</div>
<div style="position:absolute;left:616.40px;top:352.67px;font-size:9.6px;line-height:1;color:#5a5a5a;font-weight:normal;letter-spacing:0.000px;white-space:nowrap;z-index:16;transform:scaleX(0.9009);transform-origin:0 0;-webkit-text-stroke:0.1px #5a5a5a">auf eine größere Summe</div>
<div style="position:absolute;left:616.40px;top:362.97px;font-size:9.6px;line-height:1;color:#5a5a5a;font-weight:normal;letter-spacing:0.000px;white-space:nowrap;z-index:16;transform:scaleX(0.8700);transform-origin:0 0;-webkit-text-stroke:0.1px #5a5a5a">beziehen.</div>
</body></html>
